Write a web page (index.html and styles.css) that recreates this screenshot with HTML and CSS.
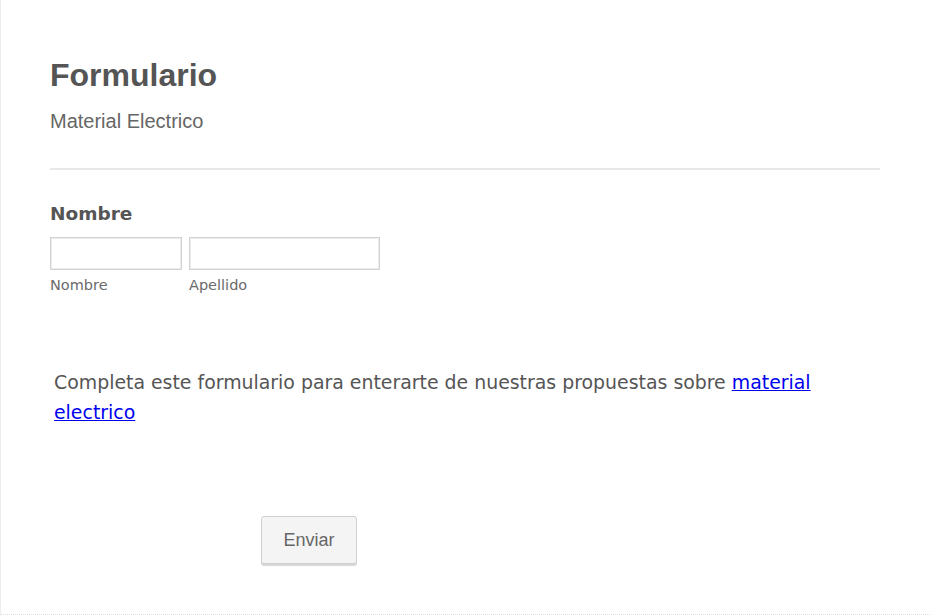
FILE: index.html
```html
<!DOCTYPE html>
<html lang="es">
<head>
    <meta charset="UTF-8">
    <meta name="viewport" content="width=device-width, initial-scale=1.0">
    <title>Formulario</title>
    <link rel="stylesheet" href="styles.css">
</head>
<body>
    <form class="form-all">
        <div class="form-header">
            <h1>Formulario</h1>
            <p class="subheader">Material Electrico</p>
        </div>
        <div class="field">
            <label class="field-label">Nombre</label>
            <div class="fullname">
                <span class="sub-field first">
                    <input type="text" name="first">
                    <span class="sublabel">Nombre</span>
                </span>
                <span class="sub-field last">
                    <input type="text" name="last">
                    <span class="sublabel">Apellido</span>
                </span>
            </div>
        </div>
        <p class="form-text">Completa este formulario para enterarte de nuestras propuestas sobre <a href="#">material electrico</a></p>
        <div class="buttons">
            <button type="button" class="submit">Enviar</button>
        </div>
    </form>
</body>
</html>
```

FILE: styles.css
```css
body {
    margin: 0;
    padding: 0;
    background: #fff;
}
.form-all {
    box-sizing: border-box;
    height: 615px;
    padding: 0 50px 0 49px;
    border-left: 1px solid #ececec;
    border-bottom: 1px dotted #dcdcdc;
    color: #555;
}
.form-header {
    padding-top: 56px;
    padding-bottom: 35px;
    border-bottom: 2px solid #e8e8e8;
    font-family: "Liberation Sans", Arial, sans-serif;
}
.form-header h1 {
    margin: 0;
    font-size: 32px;
    line-height: 38px;
    font-weight: bold;
    color: #555;
}
.subheader {
    margin: 15px 0 0;
    font-size: 20px;
    line-height: 24px;
    color: #666;
}
.field {
    padding-top: 33px;
    font-family: "DejaVu Sans", Verdana, sans-serif;
}
.field-label {
    display: block;
    font-size: 18.5px;
    line-height: 22px;
    font-weight: bold;
    color: #555;
}
.fullname {
    display: flex;
    gap: 7px;
    margin-top: 12px;
}
.sub-field {
    display: flex;
    flex-direction: column;
}
.sub-field input {
    box-sizing: border-box;
    height: 33px;
    margin: 0;
    padding: 0 6px;
    border: 1px solid #d2d2d2;
    box-shadow: inset 0 0 0 1px #ececec;
    background: #fff;
}
.first input {
    width: 132px;
}
.last input {
    width: 191px;
}
.sublabel {
    margin-top: 6px;
    font-size: 14.5px;
    line-height: 18px;
    color: #6b6b6b;
}
.form-text {
    margin: 73px 0 0;
    padding-left: 4px;
    font-family: "DejaVu Sans", Verdana, sans-serif;
    font-size: 18.9px;
    line-height: 30px;
    color: #555;
}
.form-text a {
    color: #0000ee;
}
.buttons {
    padding-top: 89px;
    padding-left: 211px;
}
.submit {
    box-sizing: border-box;
    width: 96px;
    height: 48px;
    border: 1px solid #d0d0d0;
    border-radius: 3px;
    background: #f4f4f4;
    box-shadow: 0 2px 0 #d8d8d8;
    font-family: "Liberation Sans", Arial, sans-serif;
    font-size: 18px;
    color: #666;
    cursor: pointer;
}
.submit:hover {
    background: #ececec;
}
```
